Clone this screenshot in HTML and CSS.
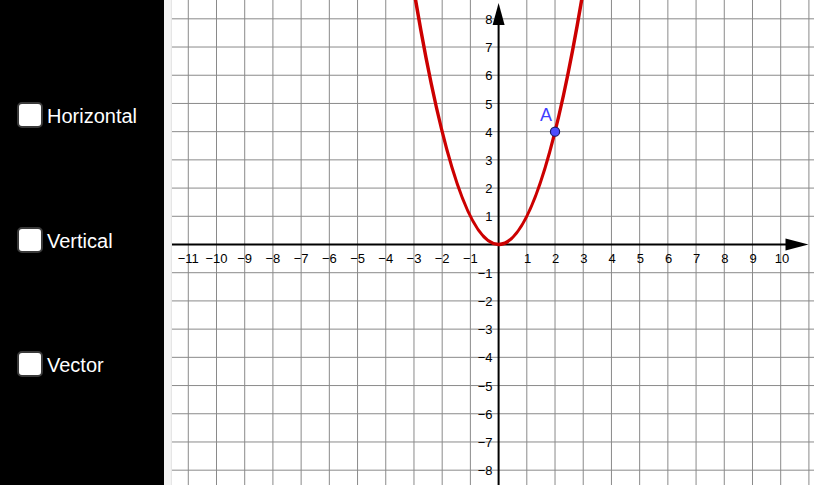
FILE: index.html
```html
<!DOCTYPE html>
<html>
<head>
<meta charset="utf-8">
<link rel="stylesheet" href="styles.css">
</head>
<body>
<div class="app">
  <div class="panel">
    <label class="opt"><span class="box"></span><span class="txt">Horizontal</span></label>
    <label class="opt"><span class="box"></span><span class="txt">Vertical</span></label>
    <label class="opt"><span class="box"></span><span class="txt">Vector</span></label>
  </div>
  <div class="strip"></div>
  <div class="graph">
    <svg class="plot" width="642" height="485" viewBox="172 0 642 485">
      <g class="grid">
        <line x1="188.29" y1="0" x2="188.29" y2="485"/>
        <line x1="216.5" y1="0" x2="216.5" y2="485"/>
        <line x1="244.71" y1="0" x2="244.71" y2="485"/>
        <line x1="272.92" y1="0" x2="272.92" y2="485"/>
        <line x1="301.13" y1="0" x2="301.13" y2="485"/>
        <line x1="329.34" y1="0" x2="329.34" y2="485"/>
        <line x1="357.55" y1="0" x2="357.55" y2="485"/>
        <line x1="385.76" y1="0" x2="385.76" y2="485"/>
        <line x1="413.97" y1="0" x2="413.97" y2="485"/>
        <line x1="442.18" y1="0" x2="442.18" y2="485"/>
        <line x1="470.39" y1="0" x2="470.39" y2="485"/>
        <line x1="526.81" y1="0" x2="526.81" y2="485"/>
        <line x1="555.02" y1="0" x2="555.02" y2="485"/>
        <line x1="583.23" y1="0" x2="583.23" y2="485"/>
        <line x1="611.44" y1="0" x2="611.44" y2="485"/>
        <line x1="639.65" y1="0" x2="639.65" y2="485"/>
        <line x1="667.86" y1="0" x2="667.86" y2="485"/>
        <line x1="696.07" y1="0" x2="696.07" y2="485"/>
        <line x1="724.28" y1="0" x2="724.28" y2="485"/>
        <line x1="752.49" y1="0" x2="752.49" y2="485"/>
        <line x1="780.7" y1="0" x2="780.7" y2="485"/>
        <line x1="808.91" y1="0" x2="808.91" y2="485"/>

        <line x1="172" y1="18.82" x2="814" y2="18.82"/>
        <line x1="172" y1="47.03" x2="814" y2="47.03"/>
        <line x1="172" y1="75.24" x2="814" y2="75.24"/>
        <line x1="172" y1="103.45" x2="814" y2="103.45"/>
        <line x1="172" y1="131.66" x2="814" y2="131.66"/>
        <line x1="172" y1="159.87" x2="814" y2="159.87"/>
        <line x1="172" y1="188.08" x2="814" y2="188.08"/>
        <line x1="172" y1="216.29" x2="814" y2="216.29"/>
        <line x1="172" y1="272.71" x2="814" y2="272.71"/>
        <line x1="172" y1="300.92" x2="814" y2="300.92"/>
        <line x1="172" y1="329.13" x2="814" y2="329.13"/>
        <line x1="172" y1="357.34" x2="814" y2="357.34"/>
        <line x1="172" y1="385.55" x2="814" y2="385.55"/>
        <line x1="172" y1="413.76" x2="814" y2="413.76"/>
        <line x1="172" y1="441.97" x2="814" y2="441.97"/>
        <line x1="172" y1="470.18" x2="814" y2="470.18"/>
      </g>

      <g class="axes">
        <line x1="172" y1="244.5" x2="790" y2="244.5"/>
        <line x1="498.6" y1="20" x2="498.6" y2="485"/>
      </g>
      <polygon class="arrow" points="808.5,244.5 785.5,238.5 785.5,250.5"/>
      <polygon class="arrow" points="498.6,3 492.6,25 504.6,25"/>

      <g class="xlab">
        <text x="188.29" y="262.5">−11</text>
        <text x="216.5" y="262.5">−10</text>
        <text x="244.71" y="262.5">−9</text>
        <text x="272.92" y="262.5">−8</text>
        <text x="301.13" y="262.5">−7</text>
        <text x="329.34" y="262.5">−6</text>
        <text x="357.55" y="262.5">−5</text>
        <text x="385.76" y="262.5">−4</text>
        <text x="413.97" y="262.5">−3</text>
        <text x="442.18" y="262.5">−2</text>
        <text x="470.39" y="262.5">−1</text>
        <text x="527.5" y="262.5">1</text>
        <text x="555.7" y="262.5">2</text>
        <text x="583.9" y="262.5">3</text>
        <text x="612.1" y="262.5">4</text>
        <text x="640.3" y="262.5">5</text>
        <text x="668.5" y="262.5">6</text>
        <text x="696.7" y="262.5">7</text>
        <text x="724.9" y="262.5">8</text>
        <text x="753.1" y="262.5">9</text>
        <text x="781.9" y="262.5">10</text>
      </g>

      <g class="ylab">
        <text x="492.5" y="24">8</text>
        <text x="492.5" y="52.2">7</text>
        <text x="492.5" y="80.4">6</text>
        <text x="492.5" y="108.6">5</text>
        <text x="492.5" y="136.8">4</text>
        <text x="492.5" y="165">3</text>
        <text x="492.5" y="193.2">2</text>
        <text x="492.5" y="221.4">1</text>
        <text x="492.5" y="277.8">−1</text>
        <text x="492.5" y="306">−2</text>
        <text x="492.5" y="334.2">−3</text>
        <text x="492.5" y="362.4">−4</text>
        <text x="492.5" y="390.6">−5</text>
        <text x="492.5" y="418.8">−6</text>
        <text x="492.5" y="447">−7</text>
        <text x="492.5" y="475.3">−8</text>
      </g>

      <path class="curve" d="M411.15,-26.6 Q498.6,515.6 586.05,-26.6"/>
      <circle class="pt" cx="555.02" cy="131.66" r="4.6"/>
      <text class="ptlab" x="540" y="120.5">A</text>
    </svg>
  </div>
</div>
</body>
</html>
```

FILE: styles.css
```css
html, body {
  margin: 0;
  padding: 0;
  background: #ffffff;
}
body {
  width: 814px;
  height: 485px;
  overflow: hidden;
  font-family: "Liberation Sans", Arial, sans-serif;
}
.app {
  display: flex;
  width: 814px;
  height: 485px;
}
.panel {
  width: 164px;
  height: 485px;
  background: #000000;
  display: flex;
  flex-direction: column;
  gap: 98.5px;
  padding: 102px 0 0 17px;
  box-sizing: border-box;
}
.opt {
  display: flex;
  align-items: center;
  height: 26px;
}
.box {
  width: 22px;
  height: 22px;
  background: #ffffff;
  border: 2px solid #3a3a3a;
  border-radius: 5px;
  flex: none;
}
.txt {
  color: #ffffff;
  font-size: 20px;
  margin-left: 4px;
  line-height: 26px;
  position: relative;
  top: 1px;
}
.strip {
  width: 7px;
  height: 485px;
  background: #f3f3f3;
  border-right: 1px solid #e6e6e6;
}
.graph {
  flex: 1;
  height: 485px;
  background: #ffffff;
}
.plot {
  display: block;
}
.grid line {
  stroke: #8a8a8a;
  stroke-width: 1;
}
.axes line {
  stroke: #000000;
  stroke-width: 2;
}
.arrow {
  fill: #000000;
}
.xlab text, .ylab text {
  font-family: "Liberation Sans", Arial, sans-serif;
  font-size: 13px;
  fill: #000000;
}
.xlab text {
  text-anchor: middle;
}
.ylab text {
  text-anchor: end;
}
.curve {
  fill: none;
  stroke: #cc0000;
  stroke-width: 3.5;
}
.pt {
  fill: #4d4dff;
  stroke: #1a1a66;
  stroke-width: 1.2;
}
.ptlab {
  font-family: "Liberation Sans", Arial, sans-serif;
  font-size: 18px;
  fill: #3f3fff;
}
```
